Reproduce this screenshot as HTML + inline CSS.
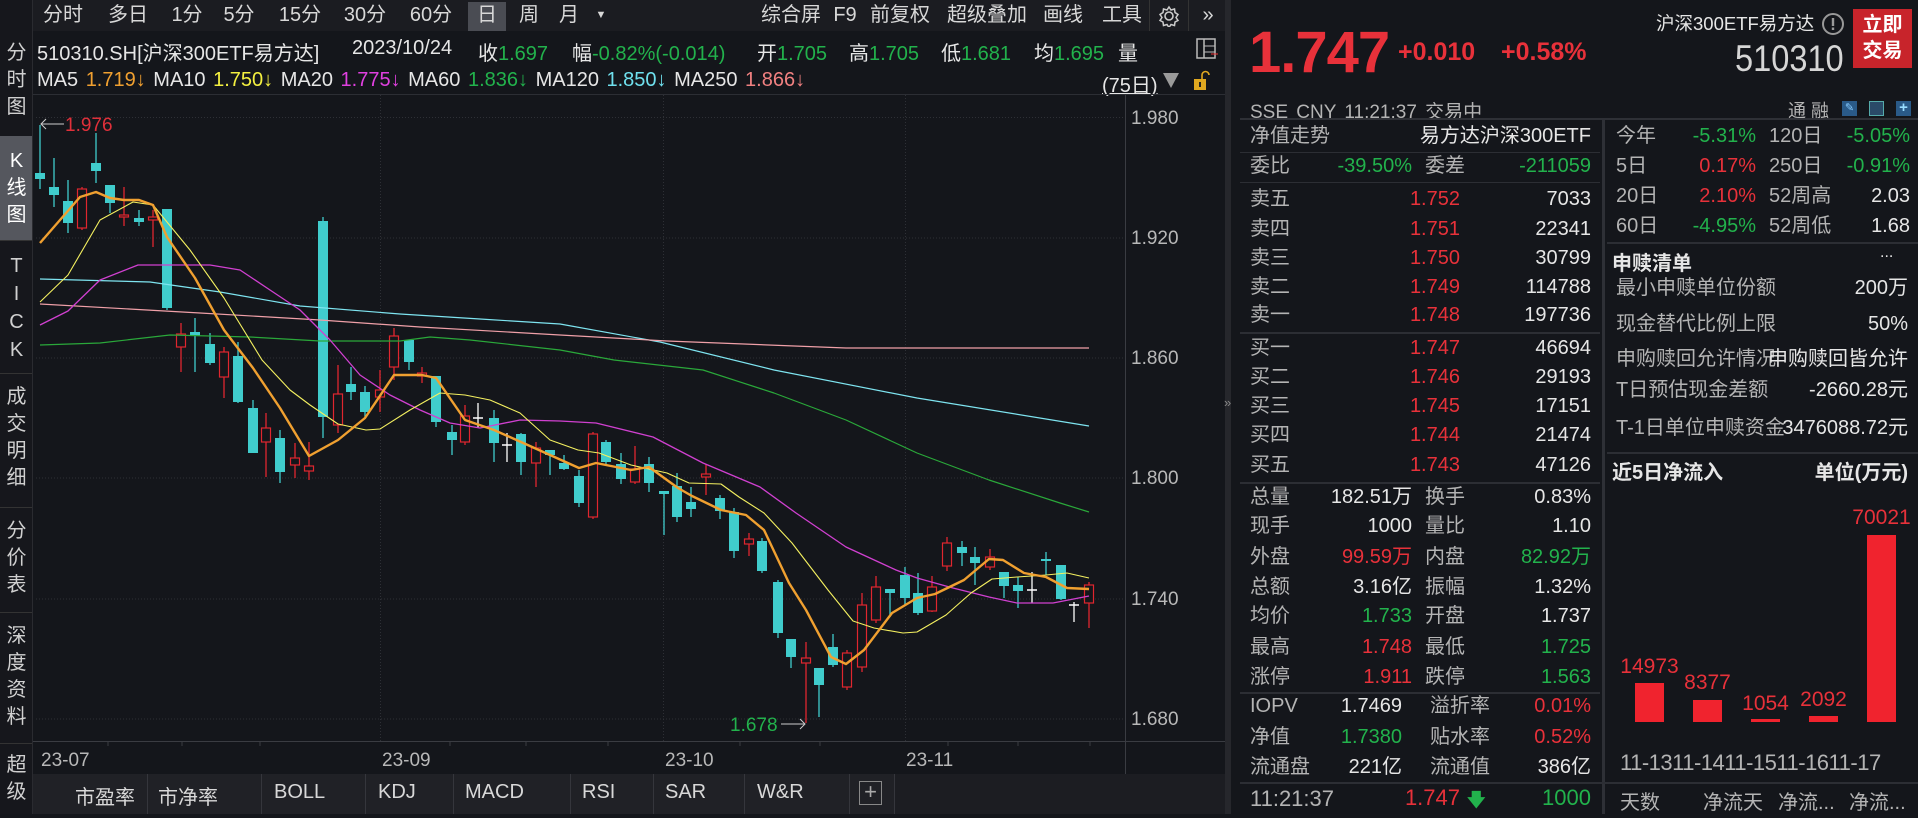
<!DOCTYPE html>
<html><head><meta charset="utf-8">
<style>
*{margin:0;padding:0;box-sizing:border-box}
body{width:1918px;height:814px;background:#14161b;overflow:hidden;position:relative;font-family:"Liberation Sans","Noto Sans CJK SC",sans-serif;color:#c8c8c8}
.a{position:absolute;white-space:nowrap}
.r{color:#e8313a}.g{color:#22b24c}.w{color:#e6e6e6}.gy{color:#b4b4b4}
.tab{position:absolute;top:0;height:31px;line-height:31px;font-size:20px;color:#d8d8d8;transform:translateX(-50%)}
.nav{position:absolute;left:0;width:33px;text-align:center;font-size:20px;line-height:27px;color:#d0d0d0}
.hl{position:absolute;height:1px;background:#2c2e34}
.t18{font-size:20px}
.rp{font-size:20px;line-height:22px}
</style></head><body>

<div class="a" style="left:33px;top:0;width:1192px;height:31px;background:#1b1c21"></div>
<div class="a" style="left:468px;top:2px;width:38px;height:29px;background:#4a4c53"></div>
<div class="tab" style="left:63px">分时</div>
<div class="tab" style="left:128px">多日</div>
<div class="tab" style="left:187px">1分</div>
<div class="tab" style="left:239px">5分</div>
<div class="tab" style="left:300px">15分</div>
<div class="tab" style="left:365px">30分</div>
<div class="tab" style="left:431px">60分</div>
<div class="tab" style="left:487px">日</div>
<div class="tab" style="left:529px">周</div>
<div class="tab" style="left:569px">月</div>
<div class="tab" style="left:601px;font-size:11px">▼</div>
<div class="tab" style="left:791px">综合屏</div>
<div class="tab" style="left:845px">F9</div>
<div class="tab" style="left:900px">前复权</div>
<div class="tab" style="left:987px">超级叠加</div>
<div class="tab" style="left:1063px">画线</div>
<div class="tab" style="left:1122px">工具</div>
<svg class="a" style="left:1157px;top:5px" width="24" height="22" viewBox="0 0 24 22"><circle cx="12" cy="11" r="4" fill="none" stroke="#ccc" stroke-width="1.6"/><path d="M12 2l2 3 3.5-1 .5 3.5 3 2-2 3 2 3-3 1.5-.5 3.5-3.5-1-2 3-2-3-3.5 1-.5-3.5-3-1.5 2-3-2-3 3-2 .5-3.5 3.5 1z" fill="none" stroke="#ccc" stroke-width="1.5"/></svg>
<div class="tab" style="left:1208px;font-size:20px">»</div>
<div class="a" style="left:1149px;top:0;width:1px;height:31px;background:#333"></div>
<div class="a" style="left:1188px;top:0;width:1px;height:31px;background:#333"></div>

<div class="a" style="left:0;top:0;width:33px;height:814px;background:#16171c;border-right:1px solid #2a2b30"></div>
<div class="a" style="left:0;top:136px;width:32px;height:104px;background:#55575e"></div>
<div class="nav" style="top:40px">分<br>时<br>图</div>
<div class="nav" style="top:148px;color:#fff">K<br>线<br>图</div>
<div class="hl" style="left:0;top:240px;width:32px;background:#333"></div>
<div class="nav" style="top:252px;line-height:28px">T<br>I<br>C<br>K</div>
<div class="hl" style="left:0;top:373px;width:32px;background:#333"></div>
<div class="nav" style="top:384px">成<br>交<br>明<br>细</div>
<div class="hl" style="left:0;top:507px;width:32px;background:#333"></div>
<div class="nav" style="top:518px">分<br>价<br>表</div>
<div class="hl" style="left:0;top:612px;width:32px;background:#333"></div>
<div class="nav" style="top:623px">深<br>度<br>资<br>料</div>
<div class="hl" style="left:0;top:743px;width:32px;background:#333"></div>
<div class="nav" style="top:752px">超<br>级</div>

<div class="a t18 w" style="left:37px;top:37px">510310.SH[沪深300ETF易方达]</div>
<div class="a t18 w" style="left:352px;top:37px">2023/10/24</div>
<div class="a t18 w" style="left:478px;top:37px">收<span class="g">1.697</span></div>
<div class="a t18 w" style="left:572px;top:37px">幅<span class="g">-0.82%(-0.014)</span></div>
<div class="a t18 w" style="left:757px;top:37px">开<span class="g">1.705</span></div>
<div class="a t18 w" style="left:849px;top:37px">高<span class="g">1.705</span></div>
<div class="a t18 w" style="left:941px;top:37px">低<span class="g">1.681</span></div>
<div class="a t18 w" style="left:1034px;top:37px">均<span class="g">1.695</span></div>
<div class="a t18 w" style="left:1118px;top:37px">量</div>
<svg class="a" style="left:1196px;top:38px" width="24" height="22"><rect x="1" y="1" width="18" height="19" fill="none" stroke="#bbb" stroke-width="1.5"/><line x1="8" y1="1" x2="8" y2="20" stroke="#bbb" stroke-width="1.5"/><line x1="8" y1="8" x2="19" y2="8" stroke="#bbb"/><line x1="8" y1="14" x2="19" y2="14" stroke="#bbb"/><line x1="15" y1="16" x2="22" y2="16" stroke="#e33"/></svg>

<div class="a t18 w" style="left:37px;top:69px;word-spacing:2px">MA5 <span style="color:#f0a030">1.719↓</span> MA10 <span style="color:#f4f040">1.750↓</span> MA20 <span style="color:#e040e0">1.775↓</span> MA60 <span style="color:#22b24c">1.836↓</span> MA120 <span style="color:#6fe0ee">1.850↓</span> MA250 <span style="color:#f08080">1.866↓</span></div>
<div class="a t18 w" style="left:1102px;top:69px;text-decoration:underline">(75日)</div>
<div class="a" style="left:1163px;top:73px;width:0;height:0;border-left:8px solid transparent;border-right:8px solid transparent;border-top:15px solid #9a9a9a"></div>
<svg class="a" style="left:1192px;top:70px" width="20" height="22"><path d="M10 9V5a3.5 3.5 0 0 1 7 0" fill="none" stroke="#e0a820" stroke-width="1.6"/><rect x="2" y="9" width="12" height="11" fill="#e0a820"/><rect x="7" y="12" width="2" height="5" fill="#222"/></svg>
<div class="hl" style="left:33px;top:94px;width:1192px;background:#2c2e34"></div>

<svg class="a" style="left:0;top:0" width="1230" height="814">
<g stroke="#2e3036" stroke-dasharray="1 2">
<line x1="36" y1="117.5" x2="1125" y2="117.5"/><line x1="36" y1="238" x2="1125" y2="238"/><line x1="36" y1="358" x2="1125" y2="358"/><line x1="36" y1="478" x2="1125" y2="478"/><line x1="36" y1="599" x2="1125" y2="599"/><line x1="36" y1="719" x2="1125" y2="719"/>
<line x1="380.5" y1="95" x2="380.5" y2="741"/><line x1="663.5" y1="95" x2="663.5" y2="741"/><line x1="905.5" y1="95" x2="905.5" y2="741"/>
</g>
<line x1="1125.5" y1="95" x2="1125.5" y2="774" stroke="#3a3c42"/>
<line x1="33" y1="741.5" x2="1225" y2="741.5" stroke="#3a3c42"/>
<g font-family="Liberation Sans" font-size="19" fill="#b8b8b8">
<text x="1131" y="124">1.980</text><text x="1131" y="244">1.920</text><text x="1131" y="364">1.860</text><text x="1131" y="484">1.800</text><text x="1131" y="605">1.740</text><text x="1131" y="725">1.680</text>
<text x="41" y="766">23-07</text><text x="382" y="766">23-09</text><text x="665" y="766">23-10</text><text x="906" y="766">23-11</text>
</g>
<g stroke="#3a3c42"><line x1="108" y1="741" x2="108" y2="746"/><line x1="182" y1="741" x2="182" y2="746"/><line x1="260" y1="741" x2="260" y2="746"/><line x1="450" y1="741" x2="450" y2="746"/><line x1="526" y1="741" x2="526" y2="746"/><line x1="608" y1="741" x2="608" y2="746"/><line x1="740" y1="741" x2="740" y2="746"/><line x1="820" y1="741" x2="820" y2="746"/><line x1="948" y1="741" x2="948" y2="746"/><line x1="1018" y1="741" x2="1018" y2="746"/><line x1="1090" y1="741" x2="1090" y2="746"/></g>
<text x="65" y="131" font-size="19" fill="#e0303a" font-family="Liberation Sans">1.976</text>
<path d="M64 124H41M46 119l-5 5 5 5" stroke="#ccc" fill="none"/>
<text x="730" y="731" font-size="19" fill="#22b24c" font-family="Liberation Sans">1.678</text>
<path d="M781 724h24M800 719l5 5-5 5" stroke="#ccc" fill="none"/>
<g id="cd"></g>
</svg>

<div class="a" style="left:33px;top:774px;width:1192px;height:40px;background:#1c1d22"></div>
<div class="a" style="left:33px;top:774px;width:861px;height:40px;background:#202126"></div>

<div class="a" style="left:1225px;top:0;width:6px;height:814px;background:#26272c"></div>
<div class="a" style="left:1224px;top:395px;color:#888;font-size:13px">»</div>

<div class="a r" style="left:1249px;top:19px;font-size:58px;font-weight:bold;letter-spacing:-1px">1.747</div>
<div class="a r" style="left:1398px;top:38px;font-size:25px;font-weight:bold">+0.010</div>
<div class="a r" style="left:1501px;top:38px;font-size:25px;font-weight:bold">+0.58%</div>
<div class="a w" style="left:1656px;top:10px;font-size:18.5px">沪深300ETF易方达</div>
<svg class="a" style="left:1821px;top:12px" width="24" height="24"><circle cx="12" cy="12" r="10" fill="none" stroke="#999" stroke-width="2"/><rect x="10.8" y="6" width="2.4" height="8" fill="#999"/><rect x="10.8" y="15.5" width="2.4" height="2.5" fill="#999"/></svg>
<div class="a" style="left:1735px;top:38px;font-size:37px;color:#d6d6d6;transform:scaleX(.88);transform-origin:left">510310</div>
<div class="a" style="left:1853px;top:9px;width:59px;height:59px;background:#c8242b;color:#fff;font-weight:bold;font-size:20px;line-height:26px;text-align:center;padding-top:3px">立即<br>交易</div>
<div class="a gy" style="left:1250px;top:97px;font-size:19px;word-spacing:3px">SSE CNY 11:21:37 交易中</div>
<div class="a gy" style="left:1788px;top:97px;font-size:18px">通 融</div>
<div class="a" style="left:1842px;top:101px;width:15px;height:15px;background:#2a5a88;color:#8cf;font-size:11px;text-align:center">✎</div>
<div class="a" style="left:1869px;top:101px;width:15px;height:15px;background:#2a4a68;border:1px solid #5aa"></div>
<div class="a" style="left:1896px;top:101px;width:15px;height:15px;background:#2a5a88;color:#9df;font-size:15px;line-height:14px;text-align:center;font-weight:bold">+</div>
<div class="hl" style="left:1240px;top:118px;width:678px;height:2px;background:#2e3036"></div>

<div class="a" style="left:1602px;top:120px;width:3px;height:694px;background:#2e3036"></div>

<script>
function el(h){document.body.insertAdjacentHTML('beforeend',h)}
var bt=[["市盈率",75],["市净率",158],["BOLL",274],["KDJ",378],["MACD",465],["RSI",582],["SAR",665],["W&R",757]];
bt.forEach(function(t){el('<div class="a" style="left:'+t[1]+'px;top:781px;font-size:20px;color:#d8d8d8">'+t[0].replace('&','&amp;')+'</div>')});
[147,261,365,453,570,653,744,849,894].forEach(function(x){el('<div class="a" style="left:'+x+'px;top:774px;width:1px;height:40px;background:#35363c"></div>')});
el('<div class="a" style="left:859px;top:781px;width:23px;height:24px;border:1px solid #888;color:#aaa;font-size:22px;line-height:20px;text-align:center">+</div>');

function row(lbl,x,y,cls,extra){el('<div class="a rp '+(cls||'gy')+'" style="left:'+x+'px;top:'+(y-11)+'px;'+(extra||'')+'">'+lbl+'</div>');}
function rt(txt,rx,y,cls,extra){el('<div class="a rp '+cls+'" style="right:'+(1918-rx)+'px;top:'+(y-11)+'px;'+(extra||'')+'">'+txt+'</div>');}
row('净值走势',1250,136);rt('易方达沪深300ETF',1591,136,'w');
el('<div class="hl" style="left:1240px;top:152px;width:360px"></div>');
row('委比',1250,166);rt('-39.50%',1412,166,'g');row('委差',1425,166);rt('-211059',1591,166,'g');
el('<div class="hl" style="left:1240px;top:182px;width:360px"></div>');
var ob=[['卖五','1.752','7033',199],['卖四','1.751','22341',229],['卖三','1.750','30799',258],['卖二','1.749','114788',287],['卖一','1.748','197736',315],['买一','1.747','46694',348],['买二','1.746','29193',377],['买三','1.745','17151',406],['买四','1.744','21474',435],['买五','1.743','47126',465]];
ob.forEach(function(o){row(o[0],1250,o[3]);rt(o[1],1460,o[3],'r');rt(o[2],1591,o[3],'w')});
el('<div class="hl" style="left:1240px;top:332px;width:360px;height:2px"></div>');
el('<div class="hl" style="left:1240px;top:482px;width:360px;height:2px"></div>');
var st=[['总量','182.51万','w','换手','0.83%','w',497],['现手','1000','w','量比','1.10','w',526],['外盘','99.59万','r','内盘','82.92万','g',557],['总额','3.16亿','w','振幅','1.32%','w',587],['均价','1.733','g','开盘','1.737','w',616],['最高','1.748','r','最低','1.725','g',647],['涨停','1.911','r','跌停','1.563','g',677]];
st.forEach(function(s){row(s[0],1250,s[6]);rt(s[1],1412,s[6],s[2]);row(s[3],1425,s[6]);rt(s[4],1591,s[6],s[5])});
el('<div class="hl" style="left:1240px;top:692px;width:360px;height:2px"></div>');
var io=[['IOPV','1.7469','w','溢折率','0.01%','r',706],['净值','1.7380','g','贴水率','0.52%','r',737],['流通盘','221亿','w','流通值','386亿','w',767]];
io.forEach(function(s){row(s[0],1250,s[6]);rt(s[1],1402,s[6],s[2]);row(s[3],1430,s[6]);rt(s[4],1591,s[6],s[5])});
el('<div class="hl" style="left:1240px;top:782px;width:678px;height:2px"></div>');
el('<div class="a gy" style="left:1250px;top:786px;font-size:22px">11:21:37</div>');
rt('1.747',1460,798,'r','font-size:22px');
el('<div class="a g" style="left:1467px;top:788px;font-size:18px;font-weight:bold">🡇</div>');
rt('1000',1591,798,'g','font-size:22px');

var pr=[['今年','-5.31%','g','120日','-5.05%','g',136],['5日','0.17%','r','250日','-0.91%','g',166],['20日','2.10%','r','52周高','2.03','w',196],['60日','-4.95%','g','52周低','1.68','w',226]];
pr.forEach(function(s){row(s[0],1616,s[6]);rt(s[1],1756,s[6],s[2]);row(s[3],1769,s[6]);rt(s[4],1910,s[6],s[5])});
el('<div class="hl" style="left:1607px;top:242px;width:311px;height:2px"></div>');
el('<div class="a w" style="left:1612px;top:247px;font-size:20px;font-weight:bold">申赎清单</div>');
el('<div class="a w" style="left:1880px;top:244px;font-size:16px">...</div>');
row('最小申赎单位份额',1616,288);rt('200万',1908,288,'w');
row('现金替代比例上限',1616,324);rt('50%',1908,324,'w');
row('申购赎回允许情况',1616,359);rt('申购赎回皆允许',1908,359,'w');
row('T日预估现金差额',1616,390);rt('-2660.28元',1908,390,'w');
row('T-1日单位申赎资金',1616,428);rt('3476088.72元',1908,428,'w');
el('<div class="hl" style="left:1607px;top:452px;width:311px;height:2px"></div>');
el('<div class="a w" style="left:1612px;top:456px;font-size:20px;font-weight:bold">近5日净流入</div>');
el('<div class="a w" style="right:10px;top:456px;font-size:20px;font-weight:bold">单位(万元)</div>');
var bars=[[1635,683,'14973',667],[1693,700,'8377',683],[1751,719,'1054',704],[1809,716,'2092',700],[1867,535,'70021',518]];
bars.forEach(function(b){el('<div class="a" style="left:'+b[0]+'px;top:'+b[1]+'px;width:29px;height:'+(722-b[1])+'px;background:#f0232e"></div>');el('<div class="a r" style="left:'+(b[0]-16)+'px;width:61px;text-align:center;top:'+(b[3]-12)+'px;font-size:21px">'+b[2]+'</div>')});
el('<div class="a gy" style="left:1620px;top:750px;font-size:22px;letter-spacing:-0.5px">11-1311-1411-1511-1611-17</div>');
row('天数',1620,803);row('净流天',1703,803);row('净流...',1778,803);row('净流...',1849,803);

var C=[[40,173,179,125,189,'t'],[54,187,195,158,207,'t'],[68,201,223,180,233,'t'],[82,189,228,187,230,'r'],[96,163,171,133,183,'t'],[110,185,203,185,213,'t'],[124,215,217,187,226,'r'],[139,218,222,210,226,'t'],[153,217,220,210,247,'r'],[167,209,308,209,310,'t'],[181,334,347,323,372,'r'],[195,332,336,318,372,'t'],[210,344,363,333,365,'t'],[224,352,377,347,398,'r'],[238,356,402,342,403,'t'],[253,408,453,400,453,'t'],[266,428,442,413,477,'r'],[280,438,472,430,483,'t'],[295,458,465,443,478,'r'],[309,466,471,442,480,'r'],[323,221,417,217,438,'t'],[338,394,425,365,433,'r'],[351,384,392,367,400,'t'],[365,392,412,386,417,'t'],[380,390,397,370,412,'r'],[394,336,367,328,380,'r'],[409,340,362,340,370,'t'],[422,373,376,367,383,'r'],[436,376,422,376,427,'t'],[452,432,440,425,455,'t'],[465,416,442,405,445,'r'],[478,418,419,403,428,'w'],[494,418,443,410,462,'t'],[507,445,446,433,462,'w'],[521,434,462,433,475,'t'],[536,448,463,442,487,'r'],[550,450,455,450,475,'t'],[564,463,469,455,470,'t'],[579,476,503,470,507,'t'],[593,434,517,432,519,'r'],[606,442,462,440,465,'t'],[621,464,479,453,484,'t'],[635,469,482,446,484,'r'],[649,464,483,457,492,'t'],[664,491,494,491,535,'t'],[677,486,517,473,522,'t'],[691,502,509,487,517,'t'],[706,474,477,464,495,'r'],[720,498,511,495,519,'t'],[734,512,551,508,558,'t'],[749,539,544,533,556,'r'],[762,541,571,538,573,'t'],[778,582,633,580,638,'t'],[791,639,657,639,668,'t'],[806,658,663,642,723,'r'],[819,668,685,668,717,'t'],[833,647,665,634,667,'t'],[847,653,687,650,690,'r'],[862,605,667,593,672,'r'],[876,587,620,576,623,'r'],[890,589,593,589,617,'t'],[905,575,598,567,605,'t'],[918,593,613,573,615,'t'],[932,587,611,576,612,'r'],[947,543,566,537,571,'r'],[962,547,553,541,566,'t'],[975,557,563,547,585,'t'],[990,557,567,549,570,'r'],[1004,572,586,572,598,'t'],[1018,585,591,577,608,'t'],[1032,590,591,572,603,'w'],[1046,559,561,552,575,'t'],[1061,565,599,565,600,'t'],[1074,605,606,602,622,'w'],[1089,585,603,582,628,'r']];
var s='';
C.forEach(function(c){var x=c[0],col=c[5]=='t'?'#40cccc':c[5]=='r'?'#e0262f':'#fff';
s+='<line x1="'+x+'" y1="'+c[3]+'" x2="'+x+'" y2="'+c[4]+'" stroke="'+col+'" stroke-width="1.3"/>';
var h=Math.max(c[2]-c[1],1.5);
if(c[5]=='t')s+='<rect x="'+(x-5)+'" y="'+c[1]+'" width="10" height="'+h+'" fill="'+col+'"/>';
else if(c[5]=='r')s+='<rect x="'+(x-4.5)+'" y="'+c[1]+'" width="9" height="'+h+'" fill="#14161b" stroke="'+col+'" stroke-width="1.2"/>';
else s+='<line x1="'+(x-5)+'" y1="'+c[1]+'" x2="'+(x+5)+'" y2="'+c[1]+'" stroke="#fff" stroke-width="1.5"/>';});
function pl(p,c,w){return '<polyline points="'+p+'" fill="none" stroke="'+c+'" stroke-width="'+w+'" stroke-linejoin="round"/>'}
s+=pl('40,279 150,282 220,292 300,306 400,314 480,319 560,324 660,342 774,370 917,398 1089,426','#7ee4f0',1.2);
s+=pl('40,304 200,313 320,320 420,327 560,335 667,341 846,348 1089,348','#f0a0a8',1.2);
s+=pl('40,345 100,343 170,335 250,337 320,341 400,341 430,337 470,340 560,350 614,360 703,370 774,393 846,420 917,453 989,480 1060,503 1089,512','#2aa83a',1.2);
s+=pl('40,325 68,311 100,280 138,265 167,265 210,265 240,270 270,290 300,310 330,340 360,375 390,395 420,410 450,423 480,428 520,420 560,421 596,423 653,437 678,450 703,463 760,487 796,513 846,547 896,570 917,578 953,588 989,597 1017,603 1053,603 1089,596','#d040d0',1.3);
s+=pl('40,302 68,275 100,220 133,202 153,205 190,250 224,298 262,360 290,390 310,405 338,424 366,430 380,429 410,410 440,393 465,395 490,400 520,413 550,440 578,450 599,453 631,465 667,473 689,483 721,484 739,497 764,513 792,543 828,590 853,621 874,628 903,633 917,632 946,615 971,593 992,579 1017,577 1046,575 1067,573 1089,578','#f4f060',1.1);
s+=pl('40,243 80,197 96,192 110,198 124,200 139,200 153,205 167,237 195,278 224,330 253,368 280,408 309,456 338,440 365,418 394,375 422,375 436,378 465,420 494,430 521,442 550,455 579,468 596,463 631,470 649,467 678,488 692,496 721,510 746,515 764,530 789,583 806,610 831,657 846,664 864,650 892,613 917,598 935,594 964,580 989,559 1003,560 1024,573 1046,577 1067,588 1089,589','#f0a030',2.4);
document.getElementById('cd').innerHTML=s;
</script>
</body></html>
